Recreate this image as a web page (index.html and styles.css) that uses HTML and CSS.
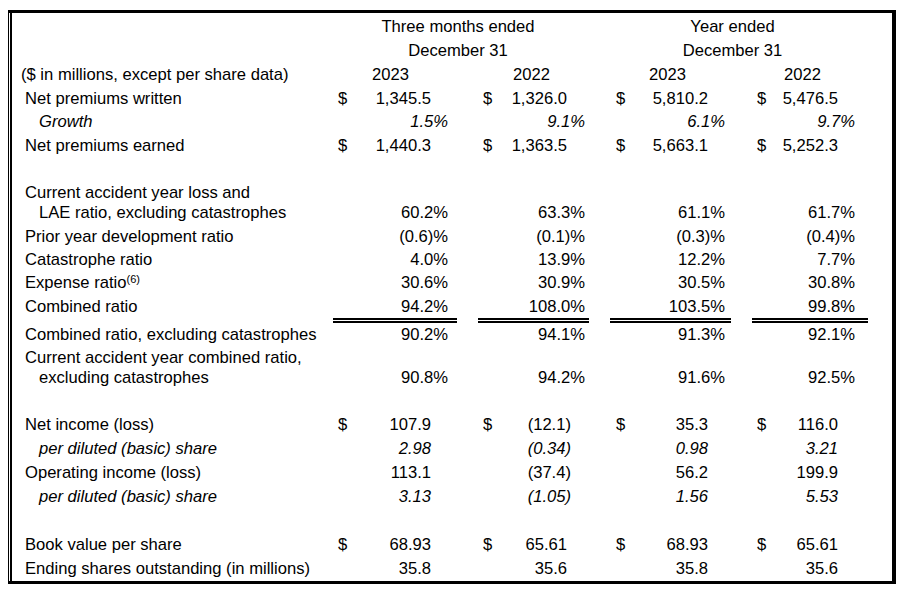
FILE: index.html
```html
<!DOCTYPE html>
<html lang="en">
<head>
<meta charset="utf-8">
<title>Financial summary</title>
<link rel="stylesheet" href="styles.css">
</head>
<body>
<div class="frame">
  <div class="inner">
    <div class="row">
      <div class="span1">Three months ended</div>
      <div class="span2">Year ended</div>
    </div>
    <div class="row">
      <div class="span1">December 31</div>
      <div class="span2">December 31</div>
    </div>
    <div class="row yrs">
      <div class="lbl top">($ in millions, except per share data)</div>
      <div class="g1">2023</div><div class="g2">2022</div><div class="g3">2023</div><div class="g4">2022</div>
    </div>
    <div class="row r23">
      <div class="lbl">Net premiums written</div>
      <div class="g1"><span class="d">$</span><span class="n">1,345.5</span></div>
      <div class="g2"><span class="d">$</span><span class="n">1,326.0</span></div>
      <div class="g3"><span class="d">$</span><span class="n">5,810.2</span></div>
      <div class="g4"><span class="d">$</span><span class="n">5,476.5</span></div>
    </div>
    <div class="row it">
      <div class="lbl ind">Growth</div>
      <div class="g1">1.5%</div><div class="g2">9.1%</div><div class="g3">6.1%</div><div class="g4">9.7%</div>
    </div>
    <div class="row">
      <div class="lbl">Net premiums earned</div>
      <div class="g1"><span class="d">$</span><span class="n">1,440.3</span></div>
      <div class="g2"><span class="d">$</span><span class="n">1,363.5</span></div>
      <div class="g3"><span class="d">$</span><span class="n">5,663.1</span></div>
      <div class="g4"><span class="d">$</span><span class="n">5,252.3</span></div>
    </div>
    <div class="row"></div>
    <div class="row multi">
      <div class="lbl">Current accident year loss and<br><span class="sub">LAE ratio, excluding catastrophes</span></div>
      <div class="g1">60.2%</div><div class="g2">63.3%</div><div class="g3">61.1%</div><div class="g4">61.7%</div>
    </div>
    <div class="row r23">
      <div class="lbl">Prior year development ratio</div>
      <div class="g1">(0.6)%</div><div class="g2">(0.1)%</div><div class="g3">(0.3)%</div><div class="g4">(0.4)%</div>
    </div>
    <div class="row r23">
      <div class="lbl">Catastrophe ratio</div>
      <div class="g1">4.0%</div><div class="g2">13.9%</div><div class="g3">12.2%</div><div class="g4">7.7%</div>
    </div>
    <div class="row">
      <div class="lbl">Expense ratio<sup>(6)</sup></div>
      <div class="g1">30.6%</div><div class="g2">30.9%</div><div class="g3">30.5%</div><div class="g4">30.8%</div>
    </div>
    <div class="row comb">
      <div class="lbl">Combined ratio</div>
      <div class="g1">94.2%</div><div class="g2">108.0%</div><div class="g3">103.5%</div><div class="g4">99.8%</div>
    </div>
    <div class="row">
      <div class="lbl">Combined ratio, excluding catastrophes</div>
      <div class="g1">90.2%</div><div class="g2">94.1%</div><div class="g3">91.3%</div><div class="g4">92.1%</div>
    </div>
    <div class="row multi m42">
      <div class="lbl">Current accident year combined ratio,<br><span class="sub">excluding catastrophes</span></div>
      <div class="g1">90.8%</div><div class="g2">94.2%</div><div class="g3">91.6%</div><div class="g4">92.5%</div>
    </div>
    <div class="row"></div>
    <div class="row">
      <div class="lbl">Net income (loss)</div>
      <div class="g1"><span class="d">$</span><span class="n">107.9</span></div>
      <div class="g2"><span class="d">$</span><span class="n neg">(12.1)</span></div>
      <div class="g3"><span class="d">$</span><span class="n">35.3</span></div>
      <div class="g4"><span class="d">$</span><span class="n">116.0</span></div>
    </div>
    <div class="row it">
      <div class="lbl ind">per diluted (basic) share</div>
      <div class="g1"><span class="n">2.98</span></div>
      <div class="g2"><span class="n neg">(0.34)</span></div>
      <div class="g3"><span class="n">0.98</span></div>
      <div class="g4"><span class="n">3.21</span></div>
    </div>
    <div class="row">
      <div class="lbl">Operating income (loss)</div>
      <div class="g1"><span class="n">113.1</span></div>
      <div class="g2"><span class="n neg">(37.4)</span></div>
      <div class="g3"><span class="n">56.2</span></div>
      <div class="g4"><span class="n">199.9</span></div>
    </div>
    <div class="row it">
      <div class="lbl ind">per diluted (basic) share</div>
      <div class="g1"><span class="n">3.13</span></div>
      <div class="g2"><span class="n neg">(1.05)</span></div>
      <div class="g3"><span class="n">1.56</span></div>
      <div class="g4"><span class="n">5.53</span></div>
    </div>
    <div class="row"></div>
    <div class="row">
      <div class="lbl">Book value per share</div>
      <div class="g1"><span class="d">$</span><span class="n">68.93</span></div>
      <div class="g2"><span class="d">$</span><span class="n">65.61</span></div>
      <div class="g3"><span class="d">$</span><span class="n">68.93</span></div>
      <div class="g4"><span class="d">$</span><span class="n">65.61</span></div>
    </div>
    <div class="row">
      <div class="lbl">Ending shares outstanding (in millions)</div>
      <div class="g1"><span class="n">35.8</span></div>
      <div class="g2"><span class="n">35.6</span></div>
      <div class="g3"><span class="n">35.8</span></div>
      <div class="g4"><span class="n">35.6</span></div>
    </div>
  </div>
</div>
</body>
</html>
```
FILE: styles.css
```css
html, body {
  margin: 0;
  padding: 0;
  background: #fff;
}
body {
  font-family: "Liberation Sans", Arial, sans-serif;
  font-size: 16.6px;
  color: #000;
}
.frame {
  margin: 10px 0 0 8px;
  width: 888px;
  box-sizing: border-box;
  border-top: 3px solid #000;
  border-right: 4px solid #000;
  border-bottom: 3px solid #000;
  border-left: 1px solid #000;
  padding-left: 1px;
}
.inner {
  border-left: 2px solid #000;
  padding-top: 2px;
}
.row {
  display: grid;
  grid-template-columns: 321px 124px 21px 111px 21px 121px 21px 116px 24px;
  height: 24px;
  line-height: 24px;
  white-space: nowrap;
}
.row > div {
  box-sizing: border-box;
}
.r23 {
  height: 23px;
  line-height: 23px;
}
.lbl { grid-column: 1; padding-left: 13px; }
.lbl.top { padding-left: 9px; }
.lbl.ind { padding-left: 27px; }
.sub { padding-left: 14px; }

.g1, .g2, .g3, .g4 { text-align: right; }
.g1 { grid-column: 2; padding-left: 5px; padding-right: 9px; --m: 17px; }
.g2 { grid-column: 4; padding-left: 5px; padding-right: 4px; --m: 18px; }
.g3 { grid-column: 6; padding-left: 6px; padding-right: 6px; --m: 17px; }
.g4 { grid-column: 8; padding-left: 5px; padding-right: 13px; --m: 17px; }

.d { float: left; }
.n { margin-right: var(--m); }
.n.neg { margin-right: calc(var(--m) - 4px); }

.it { font-style: italic; }

.span1 {
  grid-column: 2 / 5;
  text-align: center;
  padding-right: 6px;
}
.span2 {
  grid-column: 6 / 9;
  text-align: center;
  padding-right: 13px;
}

.yrs .g1, .yrs .g2, .yrs .g3, .yrs .g4 { text-align: left; padding-right: 0; }
.yrs .g1 { padding-left: 39px; }
.yrs .g2 { padding-left: 35px; }
.yrs .g3 { padding-left: 39px; }
.yrs .g4 { padding-left: 32px; }

.multi {
  height: 43px;
  line-height: 20px;
  padding-top: 1px;
  box-sizing: border-box;
}
.multi.m42 { height: 42px; }
.multi .g1, .multi .g2, .multi .g3, .multi .g4 { padding-top: 20px; }

.comb {
  height: 28px;
  line-height: 23px;
}
.comb .g1, .comb .g2, .comb .g3, .comb .g4 {
  border-bottom: 5px double #000;
}

sup {
  font-size: 11px;
  line-height: 0;
  vertical-align: 5px;
}
```
